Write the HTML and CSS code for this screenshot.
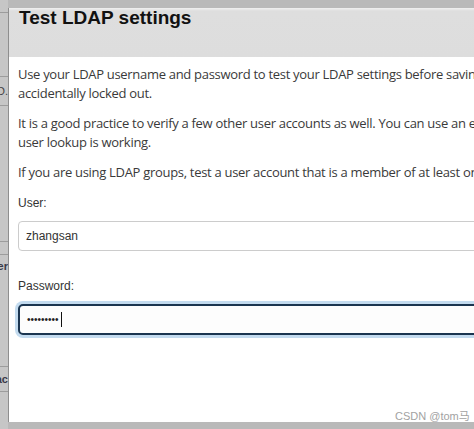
FILE: index.html
```html
<!DOCTYPE html>
<html lang="en">
<head>
<meta charset="utf-8">
<title>Test LDAP settings</title>
<link rel="stylesheet" href="styles.css">
</head>
<body>
  <div class="backdrop">
    <div class="bg-row r1"></div>
    <div class="bg-row r2"></div>
    <div class="bg-row r3"><span>D.</span></div>
    <div class="bg-row r4"></div>
    <div class="bg-row r5"></div>
    <div class="bg-row r6"><span class="bold">er</span></div>
    <div class="bg-row r7"><span class="bold">ac</span></div>
    <div class="bg-row r8"></div>
  </div>

  <div class="modal">
    <div class="modal-header">
      <h1 class="modal-title">Test LDAP settings</h1>
    </div>
    <div class="modal-body">
      <p>Use your LDAP username and password to test your LDAP settings before saving them, so you don't get<br>accidentally locked out.</p>
      <p>It is a good practice to verify a few other user accounts as well. You can use an empty password to check that<br>user lookup is working.</p>
      <p>If you are using LDAP groups, test a user account that is a member of at least one group.</p>
      <label class="field-label">User:</label>
      <div class="field"><span class="field-text">zhangsan</span></div>
      <label class="field-label pw-label">Password:</label>
      <div class="field focused"><span class="dots">&#8226;&#8226;&#8226;&#8226;&#8226;&#8226;&#8226;&#8226;&#8226;</span><span class="caret"></span></div>
    </div>
  </div>

  <div class="watermark">CSDN @tom马</div>
</body>
</html>
```
FILE: styles.css
```css
html, body {
  margin: 0;
  padding: 0;
}
body {
  width: 474px;
  height: 429px;
  overflow: hidden;
  position: relative;
  background: #b9b9b9;
  font-family: "Liberation Sans", Arial, sans-serif;
}

.backdrop {
  width: 8px;
  height: 429px;
  overflow: hidden;
  background: #c6c6c6;
  display: flex;
  flex-direction: column;
}
.bg-row {
  border-bottom: 1px solid #9c9c9c;
  display: flex;
  justify-content: flex-end;
  align-items: center;
  font-size: 11px;
  color: #444;
  white-space: nowrap;
  flex: none;
}
.bg-row .bold { font-weight: bold; color: #3a3a48; }
.r1 { height: 12px; }
.r2 { height: 63px; }
.r3 { height: 28px; }
.r4 { height: 135px; }
.r5 { height: 12px; }
.r6 { height: 111px; align-items: flex-start; }
.r6 span { margin-top: 5px; }
.r7 { height: 24px; }
.r8 { height: 36px; border-bottom: 0; }

.modal {
  position: absolute;
  left: 8px;
  top: 8px;
  width: 620px;
  height: 414px;
  background: #ffffff;
  border-left: 1px solid #8e8e8e;
  box-sizing: border-box;
  display: flex;
  flex-direction: column;
}
.modal-header {
  height: 49px;
  background: linear-gradient(#f0f0f0 0, #dedede 3px, #dddddd 100%);
  padding: 0 10px;
  flex: none;
}
.modal-title {
  margin: 0;
  font-size: 19px;
  line-height: 20px;
  font-weight: bold;
  color: #111;
}
.modal-body {
  padding: 8px 9px 0;
  font-family: "Open Sans", "Noto Sans", sans-serif;
  font-size: 13px;
  letter-spacing: -0.3px;
  line-height: 19px;
  color: #3a3a3a;
}
.modal-body p {
  margin: 0 0 11px;
  white-space: nowrap;
}
.field-label {
  display: block;
  font-family: "Liberation Sans", Arial, sans-serif;
  font-size: 12px;
  letter-spacing: 0;
  line-height: 16px;
  color: #333;
  margin-top: 13px;
}
.pw-label { margin-top: 27px; }
.field {
  margin-top: 10px;
  height: 30px;
  box-sizing: border-box;
  border: 1px solid #cccccc;
  border-radius: 4px;
  display: flex;
  align-items: center;
  padding-left: 7px;
  font-family: "Liberation Sans", Arial, sans-serif;
  font-size: 12px;
  letter-spacing: 0;
  color: #333;
  background: #fff;
}
.field.focused {
  height: 31px;
  border: 2px solid #1b3550;
  border-radius: 5px;
  box-shadow: 0 0 0 3px #c3dbef;
  background: #fdfdfd;
  padding-left: 7px;
}
.dots {
  font-size: 10px;
  color: #222;
}
.caret {
  width: 1px;
  height: 15px;
  background: #111;
  margin-left: 2px;
}

.watermark {
  position: absolute;
  left: 395px;
  top: 407px;
  font-family: "Liberation Sans", Arial, "Noto Sans CJK SC", sans-serif;
  font-size: 11px;
  color: #a2a2a2;
  white-space: nowrap;
}
```
